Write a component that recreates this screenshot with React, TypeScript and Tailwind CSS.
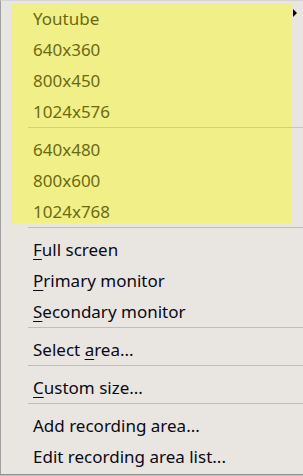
import React from "react";

type Item = { label: React.ReactNode; arrow?: boolean };

function Row({ label, arrow, tone }: Item & { tone: "hi" | "lo" }) {
  return (
    <div
      className={`relative z-10 flex h-[31px] items-center pl-[32px] pb-[1px] text-[17px] leading-none ${
        tone === "hi" ? "text-[#6b6a12]" : "text-[#0a0a14]"
      }`}
    >
      <span className="whitespace-nowrap">{label}</span>
      {arrow && (
        <svg className="absolute left-[292px] top-[6px]" width="4" height="8" viewBox="0 0 4 8">
          <path d="M0 0 L4 4 L0 8 Z" fill="#000" />
        </svg>
      )}
    </div>
  );
}

function Sep({ tone }: { tone: "hi" | "lo" }) {
  return (
    <div className="relative z-10 h-[7px] pl-[27px]">
      <div className={`h-px ${tone === "hi" ? "bg-[#d2d07a]" : "bg-[#bfbdba]"}`} />
    </div>
  );
}

const Mn = ({ children }: { children: React.ReactNode }) => (
  <span className="underline decoration-1 underline-offset-[3px]">{children}</span>
);

export default function App() {
  return (
    <div className="h-[476px] w-[303px] overflow-hidden bg-white">
      <div
        className="h-[474px] w-[303px] border-l border-t border-[#a0a0a0] border-t-[#d6d4d1] bg-[#e9e6e2] pt-[2px] shadow-[0_1px_0_#8f8f8f,0_2px_0_#c4c4c4]"
        style={{ fontFamily: '"Noto Sans", "Open Sans", sans-serif' }}
      >
        {/* highlighted presets */}
        <div className="relative">
          <div className="absolute left-[10px] top-0 z-0 h-[220px] w-[280px] bg-[#f1f088]" />
          <Row tone="hi" label="Youtube" arrow />
          <Row tone="hi" label="640x360" />
          <Row tone="hi" label="800x450" />
          <Row tone="hi" label="1024x576" />
          <Sep tone="hi" />
          <Row tone="hi" label="640x480" />
          <Row tone="hi" label="800x600" />
          <Row tone="hi" label="1024x768" />
        </div>
        <Sep tone="lo" />
        <Row tone="lo" label={<><Mn>F</Mn>ull screen</>} />
        <Row tone="lo" label={<><Mn>P</Mn>rimary monitor</>} />
        <Row tone="lo" label={<><Mn>S</Mn>econdary monitor</>} />
        <Sep tone="lo" />
        <Row tone="lo" label={<>Select <Mn>a</Mn>rea...</>} />
        <Sep tone="lo" />
        <Row tone="lo" label={<><Mn>C</Mn>ustom size...</>} />
        <Sep tone="lo" />
        <Row tone="lo" label="Add recording area..." />
        <Row tone="lo" label="Edit recording area list..." />
      </div>
    </div>
  );
}
